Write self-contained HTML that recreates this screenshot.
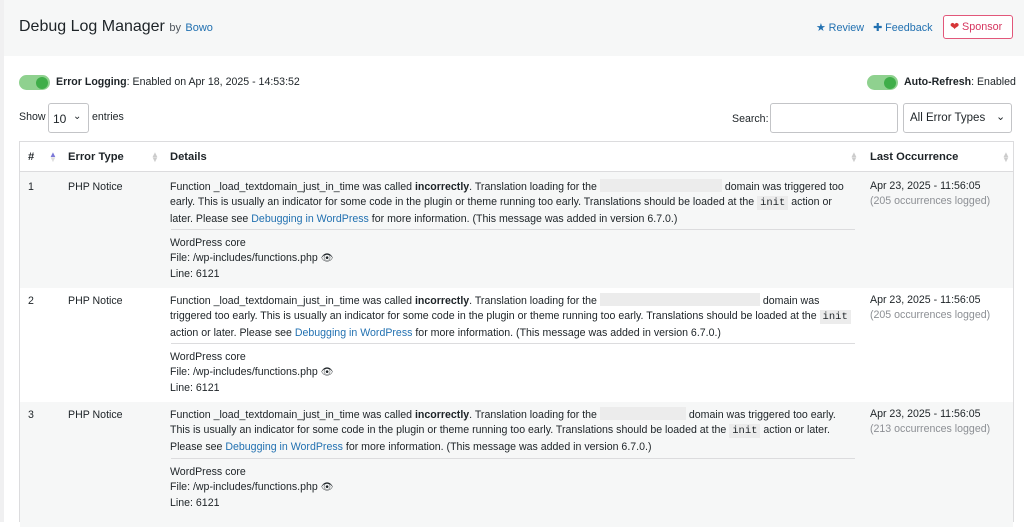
<!DOCTYPE html>
<html><head><style>
*{margin:0;padding:0;box-sizing:border-box}
body{width:1024px;height:522px;overflow:hidden;background:#fff;font-family:"Liberation Sans",sans-serif;color:#1d2327;font-size:10.6px;position:relative}
.a{position:absolute;white-space:nowrap}
.hdr{position:absolute;left:0;top:0;width:1024px;height:56px;background:#f6f7f7}
.strip{position:absolute;left:0;top:0;width:4px;height:522px;background:#f0f0f1}
a{color:#2271b1;text-decoration:none}
.tog{position:absolute;width:31px;height:15px;border-radius:8px;background:#8fd18f}
.tog::after{content:"";position:absolute;right:2px;top:1.5px;width:12px;height:12px;border-radius:50%;background:#3fae49}
.box{position:absolute;border:1px solid #c3c4c7;border-radius:3px;background:#fff}
.tbl{position:absolute;left:19px;top:141px;width:995px;height:381px;border:1px solid #dcdcde;border-bottom:none}
.row{position:absolute;left:0;width:993px}
.rd{display:inline-block;background:#ececec;height:13px;vertical-align:-2px}
code{font-family:"Liberation Mono",monospace;background:#ececec;padding:1px 3px;font-size:10.5px}
.ln{line-height:15.3px}
.sep{position:absolute;left:151px;width:684px;height:1px;background:#dcdcde}
.g{color:#8c8f94}
.sort{position:absolute;color:#ccc;font-size:8px;line-height:5px}
</style></head><body>
<div class="hdr"></div>
<div class="strip"></div>
<div class="a" style="left:19px;top:18px;font-size:16px;color:#1d2327">Debug Log Manager <span style="font-size:11px;color:#50575e">by</span> <a style="font-size:11px">Bowo</a></div>
<div class="a" style="left:816px;top:21px;font-size:10.8px;color:#2271b1">★ Review &nbsp;&nbsp;✚ Feedback</div>
<div class="a" style="left:943px;top:15px;width:70px;height:24px;border:1px solid #e2577a;border-radius:3px;color:#d63660;font-size:10.8px;line-height:22px;padding-left:6px;background:#fff"><span style="color:#d63638">❤</span> Sponsor</div>

<div class="tog" style="left:19px;top:75px"></div>
<div class="a" style="left:56px;top:76px"><b>Error Logging</b>: Enabled on Apr 18, 2025 - 14:53:52</div>
<div class="tog" style="left:867px;top:75px"></div>
<div class="a" style="left:904px;top:76px"><b>Auto-Refresh</b>: Enabled</div>

<div class="a" style="left:19px;top:111px">Show</div>
<div class="box" style="left:48px;top:103px;width:41px;height:30px"><span class="a" style="left:4px;top:8px;font-size:12px">10</span><span class="a" style="left:24px;top:7px;font-size:10px">⌄</span></div>
<div class="a" style="left:92px;top:111px">entries</div>
<div class="a" style="left:732px;top:113px">Search:</div>
<div class="box" style="left:770px;top:103px;width:128px;height:30px"></div>
<div class="box" style="left:903px;top:103px;width:109px;height:30px"><span class="a" style="left:6px;top:8px;font-size:11.5px">All Error Types</span><span class="a" style="left:92px;top:6px;font-size:11px">⌄</span></div>

<div class="tbl">
<div class="row" style="top:0;height:30px;border-bottom:1px solid #dcdcde"></div>
<div class="a" style="left:8px;top:9px;font-weight:bold;font-size:11.2px">#</div>
<div class="sort" style="left:29px;top:10px;color:#7b78d8">▲<br><span style="color:#ddd">▼</span></div>
<div class="a" style="left:48px;top:9px;font-weight:bold;font-size:11.2px">Error Type</div>
<div class="sort" style="left:131px;top:10px">▲<br>▼</div>
<div class="a" style="left:150px;top:9px;font-weight:bold;font-size:11.2px">Details</div>
<div class="sort" style="left:830px;top:10px">▲<br>▼</div>
<div class="a" style="left:850px;top:9px;font-weight:bold;font-size:11.2px">Last Occurrence</div>
<div class="sort" style="left:982px;top:10px">▲<br>▼</div>

<div class="row" style="top:30px;height:116px;background:#f6f7f7"></div>
<div class="row" style="top:260px;height:125px;background:#f6f7f7"></div>

<!-- row1 -->
<div class="a" style="left:8px;top:39px">1</div>
<div class="a" style="left:48px;top:39px">PHP Notice</div>
<div class="a ln" style="left:150px;top:37px">Function _load_textdomain_just_in_time was called <b>incorrectly</b>. Translation loading for the <span class="rd" style="width:122px"></span> domain was triggered too<br>early. This is usually an indicator for some code in the plugin or theme running too early. Translations should be loaded at the <code>init</code> action or<br>later. Please see <a>Debugging in WordPress</a> for more information. (This message was added in version 6.7.0.)</div>
<div class="sep" style="top:87px"></div>
<div class="a ln" style="left:150px;top:94px">WordPress core<br>File: /wp-includes/functions.php <span style="font-size:10px">👁</span><br>Line: 6121</div>
<div class="a ln" style="left:850px;top:37px">Apr 23, 2025 - 11:56:05<br><span class="g">(205 occurrences logged)</span></div>

<!-- row2 -->
<div class="a" style="left:8px;top:153px">2</div>
<div class="a" style="left:48px;top:153px">PHP Notice</div>
<div class="a ln" style="left:150px;top:151px">Function _load_textdomain_just_in_time was called <b>incorrectly</b>. Translation loading for the <span class="rd" style="width:160px"></span> domain was<br>triggered too early. This is usually an indicator for some code in the plugin or theme running too early. Translations should be loaded at the <code>init</code><br>action or later. Please see <a>Debugging in WordPress</a> for more information. (This message was added in version 6.7.0.)</div>
<div class="sep" style="top:201px"></div>
<div class="a ln" style="left:150px;top:208px">WordPress core<br>File: /wp-includes/functions.php <span style="font-size:10px">👁</span><br>Line: 6121</div>
<div class="a ln" style="left:850px;top:151px">Apr 23, 2025 - 11:56:05<br><span class="g">(205 occurrences logged)</span></div>

<!-- row3 -->
<div class="a" style="left:8px;top:267px">3</div>
<div class="a" style="left:48px;top:267px">PHP Notice</div>
<div class="a ln" style="left:150px;top:265px">Function _load_textdomain_just_in_time was called <b>incorrectly</b>. Translation loading for the <span class="rd" style="width:86px"></span> domain was triggered too early.<br>This is usually an indicator for some code in the plugin or theme running too early. Translations should be loaded at the <code>init</code> action or later.<br>Please see <a>Debugging in WordPress</a> for more information. (This message was added in version 6.7.0.)</div>
<div class="sep" style="top:316px"></div>
<div class="a ln" style="left:150px;top:323px">WordPress core<br>File: /wp-includes/functions.php <span style="font-size:10px">👁</span><br>Line: 6121</div>
<div class="a ln" style="left:850px;top:265px">Apr 23, 2025 - 11:56:05<br><span class="g">(213 occurrences logged)</span></div>
</div>
</body></html>
